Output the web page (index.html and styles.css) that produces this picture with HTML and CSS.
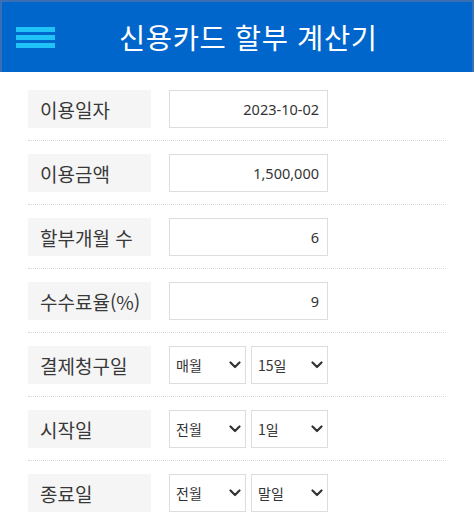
FILE: index.html
```html
<!DOCTYPE html>
<html lang="ko">
<head>
<meta charset="utf-8">
<title>신용카드 할부 계산기</title>
<link rel="stylesheet" href="styles.css">
</head>
<body>
<header class="topbar">
  <span class="burger"><i></i><i></i><i></i></span>
  <h1 class="title">신용카드 할부 계산기</h1>
</header>
<main class="form">
  <div class="row">
    <div class="label">이용일자</div>
    <input class="field" type="text" value="2023-10-02">
  </div>
  <div class="row">
    <div class="label">이용금액</div>
    <input class="field" type="text" value="1,500,000">
  </div>
  <div class="row">
    <div class="label">할부개월 수</div>
    <input class="field" type="text" value="6">
  </div>
  <div class="row">
    <div class="label">수수료율(%)</div>
    <input class="field" type="text" value="9">
  </div>
  <div class="row">
    <div class="label">결제청구일</div>
    <span class="sel"><select><option>매월</option></select><svg class="chev" viewBox="0 0 12 8"><path d="M1.5 1.5 L6 6 L10.5 1.5"/></svg></span>
    <span class="sel"><select><option>15일</option></select><svg class="chev" viewBox="0 0 12 8"><path d="M1.5 1.5 L6 6 L10.5 1.5"/></svg></span>
  </div>
  <div class="row">
    <div class="label">시작일</div>
    <span class="sel"><select><option>전월</option></select><svg class="chev" viewBox="0 0 12 8"><path d="M1.5 1.5 L6 6 L10.5 1.5"/></svg></span>
    <span class="sel"><select><option>1일</option></select><svg class="chev" viewBox="0 0 12 8"><path d="M1.5 1.5 L6 6 L10.5 1.5"/></svg></span>
  </div>
  <div class="row">
    <div class="label">종료일</div>
    <span class="sel"><select><option>전월</option></select><svg class="chev" viewBox="0 0 12 8"><path d="M1.5 1.5 L6 6 L10.5 1.5"/></svg></span>
    <span class="sel"><select><option>말일</option></select><svg class="chev" viewBox="0 0 12 8"><path d="M1.5 1.5 L6 6 L10.5 1.5"/></svg></span>
  </div>
</main>
</body>
</html>
```
FILE: styles.css
```css
html, body {
  margin: 0;
  padding: 0;
  background: #ffffff;
  font-family: "Noto Sans CJK KR", "Noto Sans", sans-serif;
  color: #333333;
}
.topbar {
  box-sizing: border-box;
  height: 72px;
  background: #0066cc;
  border: 2px solid #3a6fb3;
  border-bottom: none;
  display: flex;
  align-items: center;
  padding-left: 14px;
}
.burger {
  display: flex;
  flex-direction: column;
  gap: 3px;
  width: 39px;
  margin-top: 1px;
}
.burger i {
  display: block;
  height: 5px;
  background: #1fc3f7;
}
.title {
  margin: 0 0 0 64px;
  font-size: 28.5px;
  font-weight: 400;
  color: #ffffff;
  line-height: 1;
  letter-spacing: 0.6px;
  white-space: nowrap;
}
.form {
  margin: 18px 28px 0 28px;
}
.row {
  display: flex;
  align-items: center;
  height: 38px;
  padding: 13px 0 12px 0;
  border-bottom: 1px dotted #d9d9d9;
}
.row:first-child {
  padding-top: 0;
}
.row:last-child {
  border-bottom: none;
}
.label {
  box-sizing: border-box;
  width: 123px;
  height: 38px;
  background: #f5f5f5;
  padding-left: 12px;
  display: flex;
  align-items: center;
  font-size: 19px;
  color: #383838;
  margin-right: 18px;
  white-space: nowrap;
}
.field {
  box-sizing: border-box;
  width: 159px;
  height: 38px;
  border: 1px solid #dddddd;
  background: #ffffff;
  text-align: right;
  padding: 0 8px 0 4px;
  font-family: "Noto Sans", "Noto Sans CJK KR", sans-serif;
  font-size: 14.5px;
  color: #333333;
  margin: 0;
  outline: none;
}
.sel {
  position: relative;
  display: block;
  width: 77px;
  height: 38px;
  margin-right: 5px;
}
.sel select {
  box-sizing: border-box;
  appearance: none;
  -webkit-appearance: none;
  width: 77px;
  height: 38px;
  border: 1px solid #dddddd;
  border-radius: 0;
  background: #ffffff;
  padding: 0 0 0 6px;
  margin: 0;
  font-family: "Noto Sans CJK KR", "Noto Sans", sans-serif;
  font-size: 14px;
  color: #333333;
  outline: none;
}
.chev {
  position: absolute;
  right: 5px;
  top: 15px;
  width: 12px;
  height: 8px;
  pointer-events: none;
}
.chev path {
  fill: none;
  stroke: #333333;
  stroke-width: 2.2;
  stroke-linecap: round;
  stroke-linejoin: round;
}
```
